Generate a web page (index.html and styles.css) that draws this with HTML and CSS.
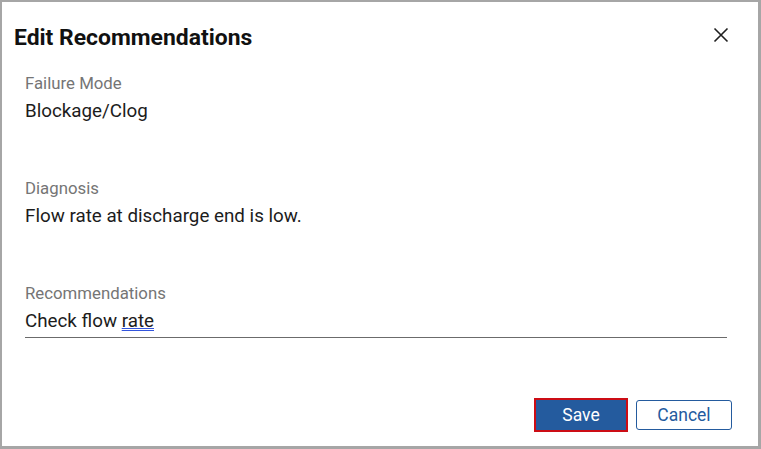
FILE: index.html
```html
<!DOCTYPE html>
<html lang="en">
<head>
<meta charset="utf-8">
<title>Edit Recommendations</title>
<link rel="stylesheet" href="styles.css">
</head>
<body>
<div class="dialog">
  <div class="header">
    <h1 class="title">Edit Recommendations</h1>
    <button class="close" aria-label="Close">
      <svg width="16" height="16" viewBox="0 0 16 16"><path d="M1.5 1.5 L14.5 14.5 M14.5 1.5 L1.5 14.5" stroke="#1f1f1f" stroke-width="1.6" fill="none"/></svg>
    </button>
  </div>
  <div class="body">
    <div class="field">
      <div class="label">Failure Mode</div>
      <div class="value">Blockage/Clog</div>
    </div>
    <div class="field">
      <div class="label">Diagnosis</div>
      <div class="value">Flow rate at discharge end is low.</div>
    </div>
    <div class="field">
      <div class="label">Recommendations</div>
      <div class="value input">Check flow <span class="spell">rate</span></div>
    </div>
  </div>
  <div class="footer">
    <button class="btn btn-primary">Save</button>
    <button class="btn btn-secondary">Cancel</button>
  </div>
</div>
</body>
</html>
```
FILE: styles.css
```css
* { box-sizing: border-box; }
html, body { margin: 0; padding: 0; background: #fff; }
body { font-family: Roboto, "Liberation Sans", sans-serif; }

.dialog {
  width: 761px;
  height: 449px;
  border-style: solid;
  border-color: #a6a6a6;
  border-width: 2px 3px 3px 2px;
  background: #fff;
  display: flex;
  flex-direction: column;
}

.header {
  display: flex;
  justify-content: space-between;
  align-items: flex-start;
  padding: 23px 28px 0 12px;
}

.title {
  margin: 0;
  font-size: 22.9px;
  line-height: 26px;
  font-weight: 700;
  color: #111;
}

.close {
  border: 0;
  background: none;
  padding: 0;
  margin-top: 1px;
  width: 18px;
  height: 18px;
  display: flex;
  align-items: center;
  justify-content: center;
  cursor: pointer;
}

.body {
  padding: 23px 31px 0 23px;
  display: flex;
  flex-direction: column;
  gap: 57px;
  flex: 1;
}

.label {
  font-size: 16.8px;
  line-height: 19px;
  color: #757575;
  margin-bottom: 7px;
}

.value {
  font-size: 18.8px;
  line-height: 22px;
  color: #1c1c1c;
}

.input {
  border-bottom: 1px solid #6b6b6b;
  padding-bottom: 5px;
}

.spell {
  text-decoration: underline double #3355dd;
  text-underline-offset: 1px;
  text-decoration-thickness: 1px;
}

.footer {
  display: flex;
  justify-content: flex-end;
  align-items: center;
  gap: 10px;
  padding: 0 26px 16px 0;
}

.btn {
  font-family: Roboto, "Liberation Sans", sans-serif;
  font-size: 17.5px;
  height: 30px;
  border-radius: 3px;
  cursor: pointer;
  padding: 0;
}

.btn-primary {
  width: 90px;
  background: #245b9e;
  color: #fff;
  border: 1px solid #245b9e;
  border-radius: 0;
  outline: 2px solid #cc0d15;
}

.btn-secondary {
  width: 96px;
  background: #fff;
  color: #245b9e;
  border: 1px solid #245b9e;
}
```
